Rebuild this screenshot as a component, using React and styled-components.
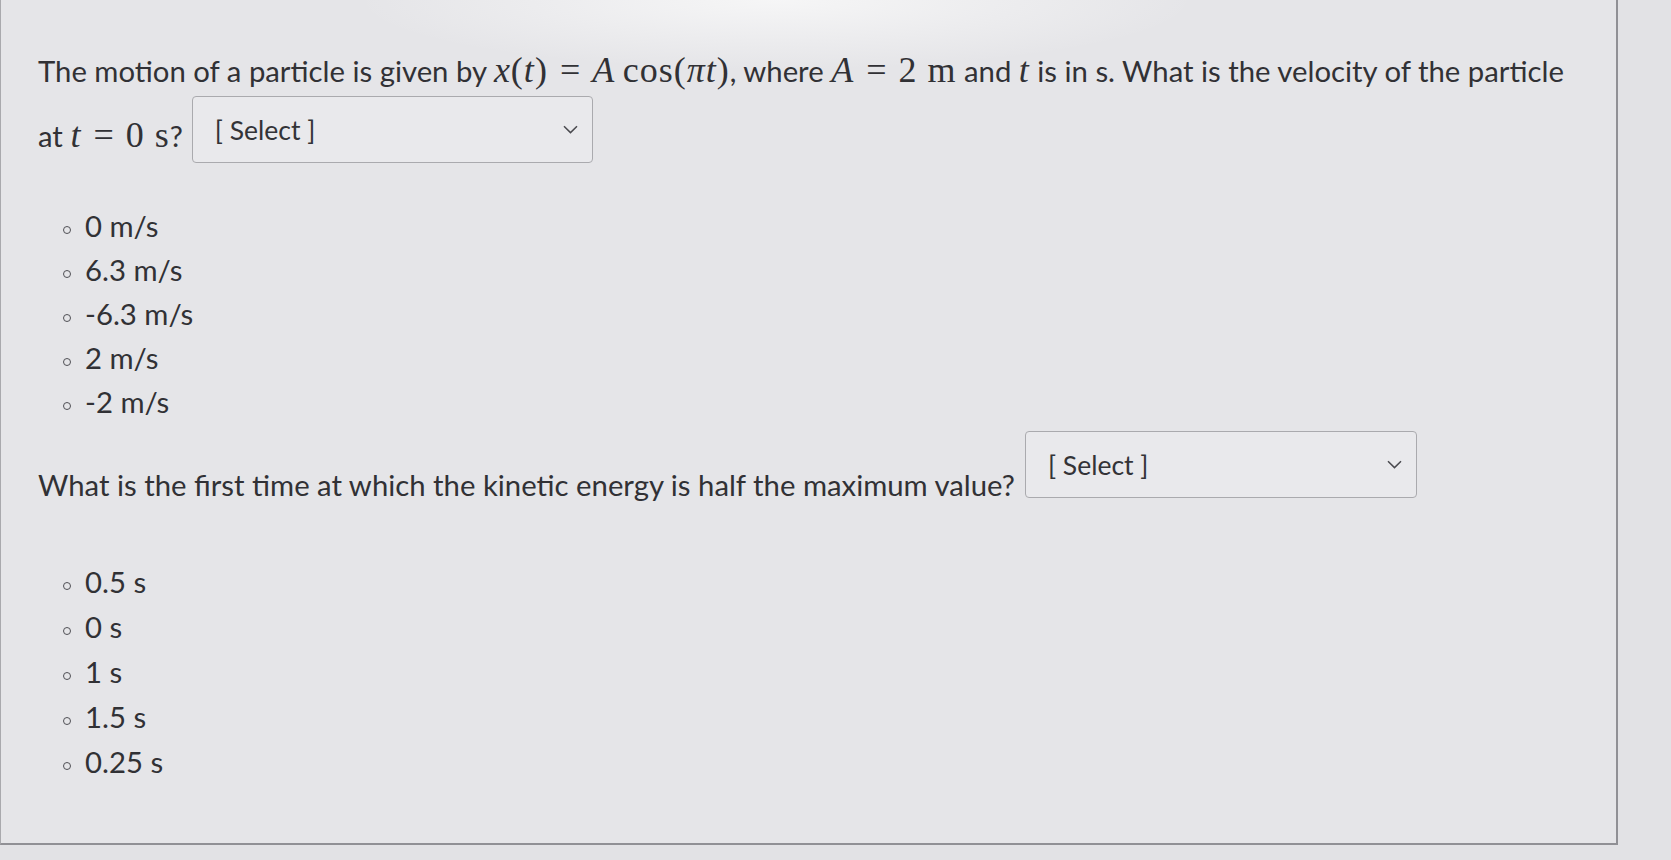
import React from "react";
import styled, { createGlobalStyle } from "styled-components";

const GlobalStyle = createGlobalStyle`
  html, body { margin: 0; padding: 0; background: #e2e2e5; }
  body { font-family: Lato, "Open Sans", sans-serif; color: #313135; }
  * { box-sizing: border-box; }
`;

const Screen = styled.div`
  width: 1671px;
  height: 860px;
  overflow: hidden;
  background: #e2e2e5;
`;

const Panel = styled.section`
  width: 1618px;
  height: 845px;
  border-left: 1px solid #a9a9ad;
  border-right: 2px solid #909095;
  border-bottom: 2px solid #909095;
  padding: 52px 0 0 37px;
  background:
    radial-gradient(ellipse 420px 70px at 48% 0%, rgba(250, 250, 250, 0.8), rgba(250, 250, 250, 0)),
    #e5e5e8;
  font-size: 29.3px;
`;

const Line = styled.div`
  line-height: 38px;
  white-space: nowrap;
  margin-top: ${(p) => p.$mt || 0}px;
`;

const Row = styled.div`
  display: flex;
  align-items: flex-start;
  white-space: nowrap;
  margin-top: ${(p) => p.$mt || 0}px;
`;

const RowText = styled.span`
  line-height: 38px;
  margin-top: ${(p) => p.$mt || 0}px;
`;

const MathVar = styled.span`
  font-family: "Liberation Serif", "DejaVu Serif", serif;
  font-style: ${(p) => (p.$upright ? "normal" : "italic")};
  font-size: 36px;
  line-height: 1;
  letter-spacing: 1px;
`;

const MathOp = styled.span`
  font-family: "Liberation Serif", "DejaVu Serif", serif;
  font-size: 36px;
  line-height: 1;
  margin: 0 ${(p) => p.$gap || 12}px;
`;

const SelectBox = styled.div`
  display: flex;
  align-items: center;
  justify-content: space-between;
  width: ${(p) => p.$w}px;
  height: 67px;
  margin-left: ${(p) => p.$ml}px;
  padding: 0 14px 0 22px;
  border: 1.5px solid #aaaaae;
  border-radius: 4px;
  background: rgba(236, 236, 239, 0.55);
  font-size: 26.5px;
  color: #333337;
`;

const Chevron = () => (
  <svg width="15" height="9" viewBox="0 0 15 9" fill="none">
    <path d="M1 1.2 L7.5 7.6 L14 1.2" stroke="#4a4a4f" strokeWidth="1.5" />
  </svg>
);

const List = styled.ul`
  list-style: none;
  margin: ${(p) => p.$mt}px 0 0 0;
  padding: 0 0 0 25px;
`;

const Item = styled.li`
  line-height: ${(p) => p.$lh}px;
`;

const Bullet = styled.span`
  display: inline-block;
  width: 8px;
  height: 8px;
  border: 1.4px solid #505055;
  border-radius: 50%;
  vertical-align: middle;
  margin-right: 14px;
`;

const Choices = ({ items, mt, lh }) => (
  <List $mt={mt}>
    {items.map((t) => (
      <Item key={t} $lh={lh}>
        <Bullet />
        {t}
      </Item>
    ))}
  </List>
);

export default function App() {
  return (
    <Screen>
      <GlobalStyle />
      <Panel>
        <Line>
          The motion of a particle is given by{" "}
          <MathVar>x</MathVar>
          <MathVar $upright>(</MathVar>
          <MathVar>t</MathVar>
          <MathVar $upright>)</MathVar>
          <MathOp>=</MathOp>
          <MathVar>A</MathVar> <MathVar $upright>cos(</MathVar>
          <MathVar>πt</MathVar>
          <MathVar $upright>)</MathVar>, where <MathVar>A</MathVar>
          <MathOp>=</MathOp>
          <MathVar $upright>2 m</MathVar> and <MathVar>t</MathVar> is in s.
          What is the velocity of the particle
        </Line>
        <Row $mt={6}>
          <RowText $mt={21}>
            at <MathVar>t</MathVar>
            <MathOp>=</MathOp>
            <MathVar $upright>0 s</MathVar>?
          </RowText>
          <SelectBox $w={401} $ml={9}>
            <span>[ Select ]</span>
            <Chevron />
          </SelectBox>
        </Row>
        <Choices mt={41} lh={44} items={["0 m/s", "6.3 m/s", "-6.3 m/s", "2 m/s", "-2 m/s"]} />
        <Row $mt={7}>
          <RowText $mt={35}>
            What is the first time at which the kinetic energy is half the maximum value?
          </RowText>
          <SelectBox $w={392} $ml={10}>
            <span>[ Select ]</span>
            <Chevron />
          </SelectBox>
        </Row>
        <Choices mt={55} lh={45} items={["0.5 s", "0 s", "1 s", "1.5 s", "0.25 s"]} />
      </Panel>
    </Screen>
  );
}
